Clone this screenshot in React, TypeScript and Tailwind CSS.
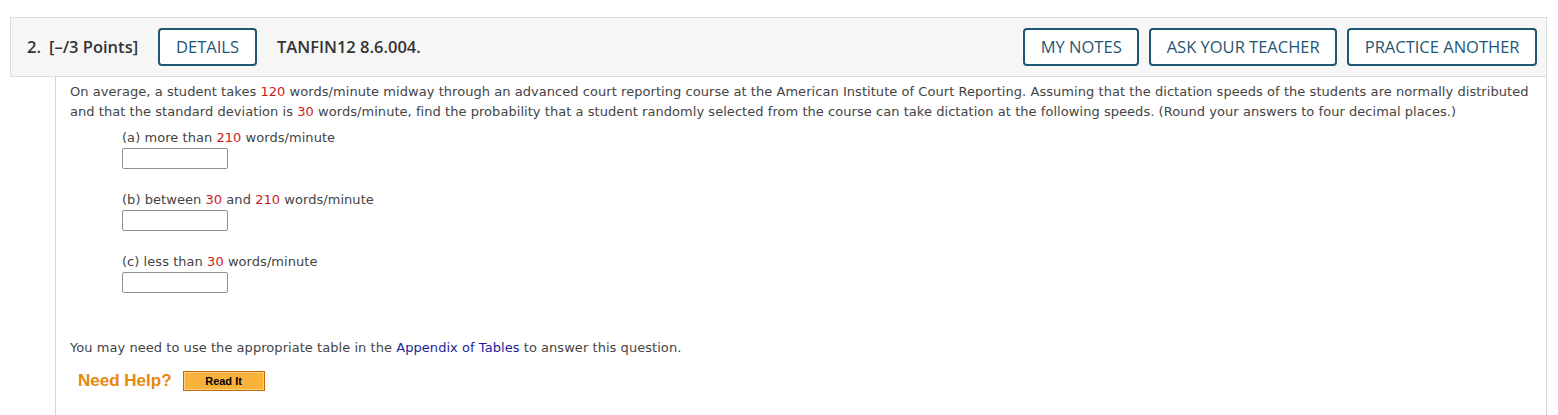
import React from "react";

const btn =
  "h-[38px] px-[16px] border-2 border-[#1f5673] rounded-[4px] text-[#1f5673] text-[16.5px] font-['Open_Sans',sans-serif] bg-white flex items-center";

function Red({ children }: { children: React.ReactNode }) {
  return <span className="text-[#d01a1a]">{children}</span>;
}

function Answer() {
  return <div className="w-[106px] h-[21px] border border-[#8f8f8f] rounded-[2px] bg-white mt-[1px]" />;
}

export default function App() {
  return (
    <div className="bg-white w-[1558px] h-[415px] pt-[17px] pl-[10px] overflow-hidden">
      <div className="w-[1537px]">
        {/* Header */}
        <div className="h-[60px] bg-[#f6f6f6] border border-[#dcdcdc] flex items-center pl-[16px] pr-[9px] font-['Open_Sans',sans-serif] text-[#333]">
          <span className="text-[16.5px] font-semibold">2.</span>
          <span className="text-[16.5px] font-semibold ml-[8px]">[–/3 Points]</span>
          <button className={btn + " ml-[20px]"}>DETAILS</button>
          <span className="text-[16.5px] font-semibold ml-[20px]">TANFIN12 8.6.004.</span>
          <div className="ml-auto flex gap-[10px]">
            <button className={btn.replace("px-[16px]", "px-[15.5px]")}>MY NOTES</button>
            <button className={btn.replace("px-[16px]", "px-[15.5px]")}>ASK YOUR TEACHER</button>
            <button className={btn.replace("px-[16px]", "px-[15.5px]")}>PRACTICE ANOTHER</button>
          </div>
        </div>

        {/* Body */}
        <div className="ml-[45px] border-l border-r border-[#d6d6d6] h-[340px] pl-[14px] pr-[14px] pt-[5px] font-['DejaVu_Sans',Verdana,sans-serif] text-[13px] text-[#444] tracking-[0.05px]">
          <p className="leading-[20px]">
            On average, a student takes <Red>120</Red> words/minute midway through an advanced court reporting course at the American Institute of Court Reporting. Assuming that the dictation speeds of the students are normally distributed and that the standard deviation is <Red>30</Red> words/minute, find the probability that a student randomly selected from the course can take dictation at the following speeds. (Round your answers to four decimal places.)
          </p>
          <div className="pl-[52px] mt-[6px] flex flex-col gap-[21px]">
            <div>
              <div className="leading-[19px]">
                (a) more than <Red>210</Red> words/minute
              </div>
              <Answer />
            </div>
            <div>
              <div className="leading-[19px]">
                (b) between <Red>30</Red> and <Red>210</Red> words/minute
              </div>
              <Answer />
            </div>
            <div>
              <div className="leading-[19px]">
                (c) less than <Red>30</Red> words/minute
              </div>
              <Answer />
            </div>
          </div>
          <p className="mt-[45px] leading-[20px]">
            You may need to use the appropriate table in the{" "}
            <span className="text-[#1c1c99]">Appendix of Tables</span> to answer this question.
          </p>
          <div className="flex items-center mt-[10px] pl-[8px]">
            <span className="font-['Liberation_Sans',Arial,sans-serif] font-bold text-[17px] text-[#e8870e] tracking-normal">
              Need Help?
            </span>
            <button className="ml-[11px] w-[82px] h-[20px] border border-[#c4660a] bg-[#f8b23a] shadow-[inset_0_0_0_1px_#fcd27a] flex items-center justify-center font-['Liberation_Sans',Arial,sans-serif] font-bold text-[11px] text-black tracking-normal">
              Read It
            </button>
          </div>
        </div>
      </div>
    </div>
  );
}
